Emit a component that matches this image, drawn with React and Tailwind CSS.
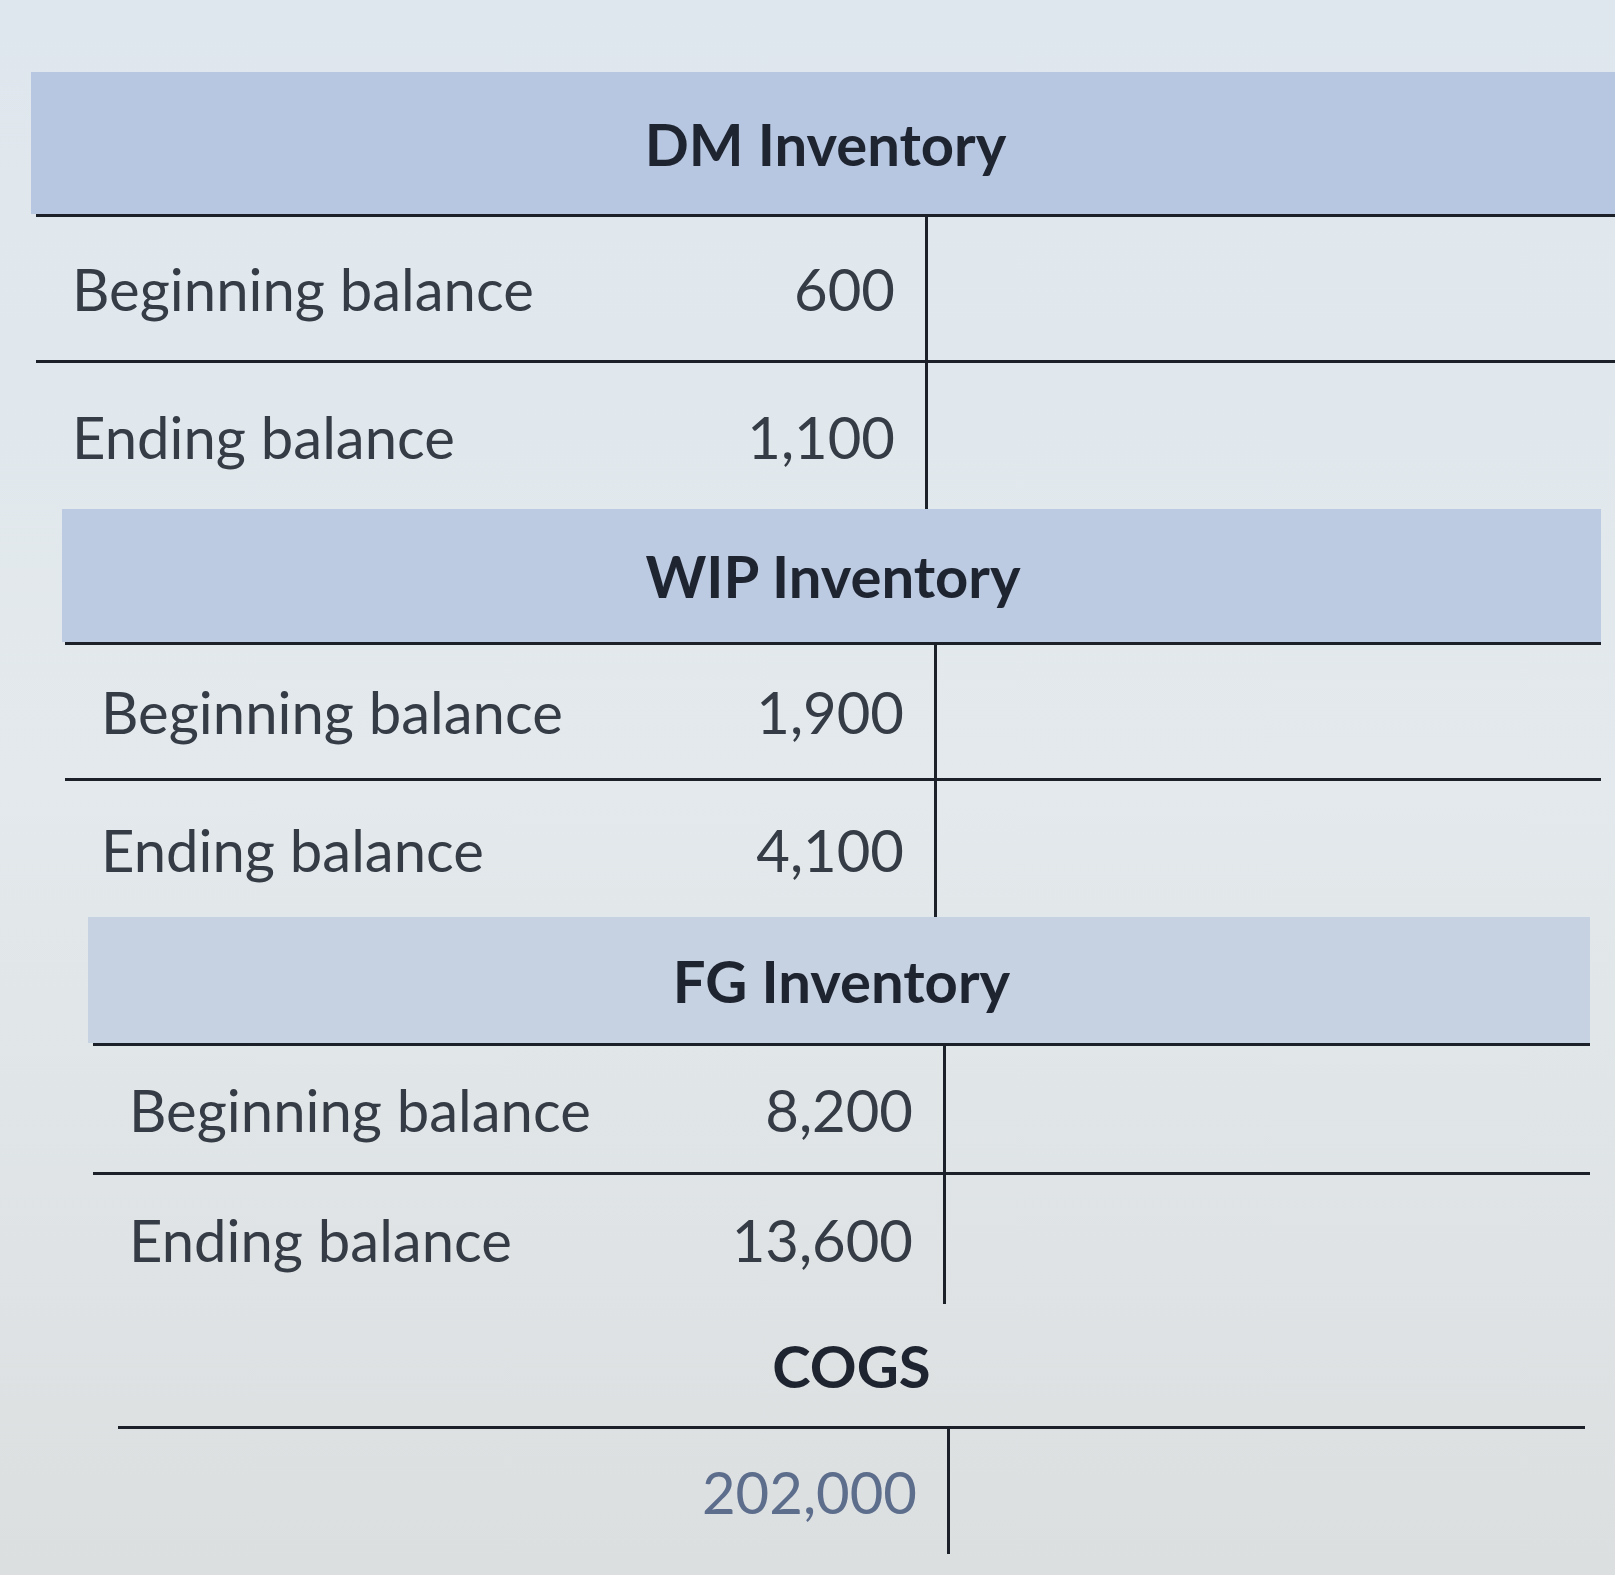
const sections = [
  {
    title: 'DM Inventory',
    wrap: 'ml-[31px] mr-0',
    band: 'bg-[#b7c7e1]',
    head: 'h-[142px] pl-[5px]',
    cols: 'grid-cols-[892px_1fr] ml-[5px]',
    row: 'h-[146px]',
    rows: [
      ['Beginning balance', '600'],
      ['Ending balance', '1,100'],
    ],
  },
  {
    title: 'WIP Inventory',
    wrap: 'ml-[62px] mr-[14px]',
    band: 'bg-[#bccbe2]',
    head: 'h-[133px] pl-[3px]',
    cols: 'grid-cols-[872px_1fr] ml-[3px]',
    row: 'h-[136px]',
    rows: [
      ['Beginning balance', '1,900'],
      ['Ending balance', '4,100'],
    ],
  },
  {
    title: 'FG Inventory',
    wrap: 'ml-[88px] mr-[25px]',
    band: 'bg-[#c6d2e1]',
    head: 'h-[126px] pl-[5px]',
    cols: 'grid-cols-[853px_1fr] ml-[5px]',
    row: 'h-[129px]',
    rows: [
      ['Beginning balance', '8,200'],
      ['Ending balance', '13,600'],
    ],
  },
  {
    title: 'COGS',
    wrap: 'ml-[118px] mr-[30px]',
    band: 'bg-transparent',
    head: 'h-[122px]',
    cols: 'grid-cols-[832px_1fr]',
    row: 'h-[125px]',
    value: 'text-[#5d6d8c]',
    rows: [['', '202,000']],
  },
];

function TAccount({ s }) {
  return (
    <div className={s.wrap}>
      <div className={`${s.band} ${s.head} flex items-center justify-center`}>
        <h2 className="text-[58px] font-bold text-[#1f2431]">{s.title}</h2>
      </div>
      <div className={`${s.cols} grid border-t-[3px] border-[#1c2029]`}>
        {s.rows.map(([label, value], i) => (
          <div key={i} className="contents">
            <div
              className={`${s.row} flex items-center justify-between pl-[36px] pr-[30px] border-r-[3px] border-[#1c2029] ${
                i < s.rows.length - 1 ? 'border-b-[3px]' : ''
              }`}
            >
              <span className="text-[58px] text-[#363c46]">{label}</span>
              <span className={`text-[58px] ${s.value ?? 'text-[#363c46]'}`}>{value}</span>
            </div>
            <div className={`${s.row} ${i < s.rows.length - 1 ? 'border-b-[3px] border-[#1c2029]' : ''}`} />
          </div>
        ))}
      </div>
    </div>
  );
}

export default function App() {
  return (
    <div
      className="w-[1615px] h-[1575px] pt-[72px] bg-gradient-to-b from-[#dfe7ee] via-[#e3e9ec] to-[#dcdfe0] overflow-hidden"
      style={{ fontFamily: 'Lato, "Open Sans", sans-serif' }}
    >
      {sections.map((s) => (
        <TAccount key={s.title} s={s} />
      ))}
    </div>
  );
}
